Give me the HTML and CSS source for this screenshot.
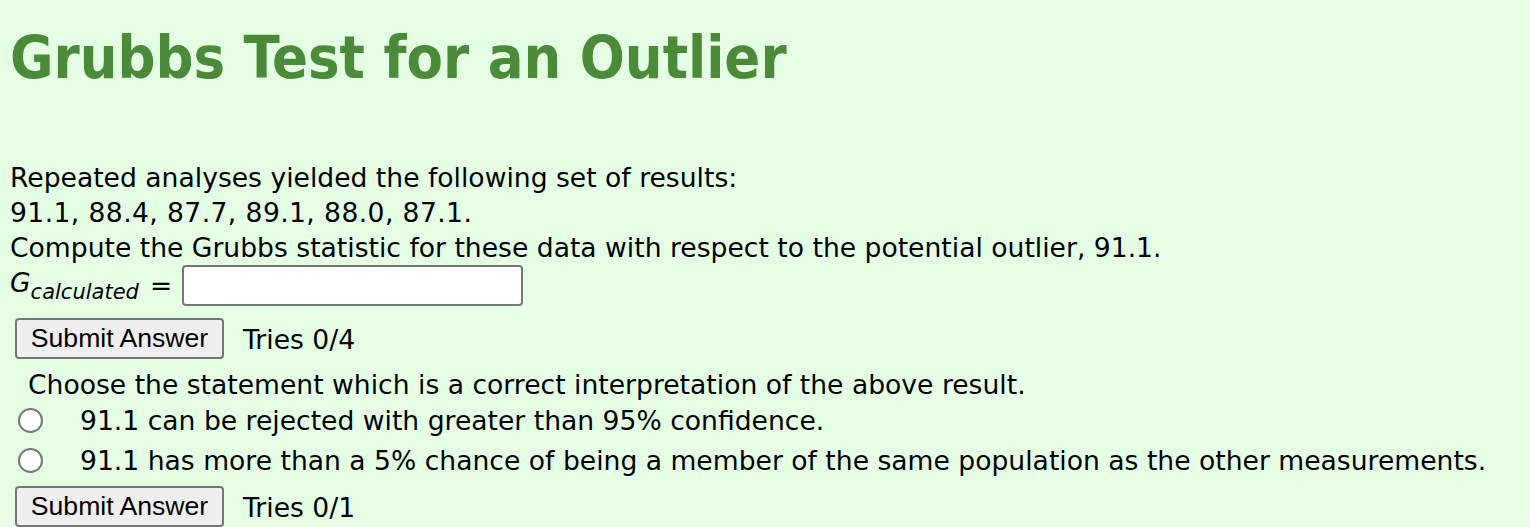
FILE: index.html
```html
<!DOCTYPE html>
<html>
<head>
<meta charset="utf-8">
<link rel="stylesheet" href="styles.css">
</head>
<body>
<h1 class="title">Grubbs Test for an Outlier</h1>
<div class="problem">
  <div class="line">Repeated analyses yielded the following set of results:</div>
  <div class="line nums">91.1, 88.4, 87.7, 89.1, 88.0, 87.1.</div>
  <div class="line">Compute the Grubbs statistic for these data with respect to the potential outlier, 91.1.</div>
  <div class="gline"><span class="gvar">G<sub>calculated</sub></span><span class="eq">=</span><input class="answer" type="text"></div>
  <div class="submitrow first"><button class="submit">Submit Answer</button><span class="tries">Tries 0/4</span></div>
  <div class="question">Choose the statement which is a correct interpretation of the above result.</div>
  <label class="choice"><input type="radio" name="c" class="radio"><span class="ctext">91.1 can be rejected with greater than 95% confidence.</span></label>
  <label class="choice"><input type="radio" name="c" class="radio"><span class="ctext">91.1 has more than a 5% chance of being a member of the same population as the other measurements.</span></label>
  <div class="submitrow last"><button class="submit">Submit Answer</button><span class="tries">Tries 0/1</span></div>
</div>
</body>
</html>
```
FILE: styles.css
```css
html, body {
  margin: 0;
  padding: 0;
  background: #e5ffe5;
}
body {
  padding: 0 10px;
  font-family: "DejaVu Sans", Verdana, sans-serif;
  color: #000;
}
.title {
  margin: 0;
  padding-top: 23px;
  font-family: "DejaVu Sans Condensed", "DejaVu Sans", sans-serif;
  font-stretch: condensed;
  font-size: 59px;
  line-height: 70px;
  font-weight: bold;
  color: #4a8a38;
}
.problem {
  margin-top: 67px;
  font-size: 26.6px;
}
.line {
  line-height: 35px;
  height: 35px;
  white-space: nowrap;
}
.nums {
  letter-spacing: 0.4px;
}
.gline {
  display: flex;
  align-items: center;
  height: 41px;
}
.gvar {
  font-style: italic;
}
.gvar sub {
  font-size: 21px;
  vertical-align: -7px;
}
.eq {
  margin: 0 10px 0 11px;
}
.answer {
  width: 333px;
  height: 33px;
  margin: 0;
  padding: 2px;
  border: 2px solid #767676;
  border-radius: 4px;
  background: #fff;
  box-sizing: content-box;
}
.submitrow {
  display: flex;
  align-items: center;
  padding-left: 5px;
  height: 41px;
}
.submitrow.first {
  margin-top: 12px;
}
.submitrow.last {
  margin-top: 6px;
}
.submit {
  font-family: "Liberation Sans", Arial, sans-serif;
  font-size: 26.6px;
  height: 41px;
  width: 209px;
  padding: 0;
  border: 2px solid #767676;
  border-radius: 4px;
  background: #efefef;
  color: #000;
}
.tries {
  margin-left: 19px;
  padding-top: 2px;
}
.question {
  margin-top: 11px;
  padding-left: 18px;
  line-height: 30px;
}
.choice {
  display: flex;
  align-items: center;
  height: 40px;
}
.radio {
  appearance: none;
  -webkit-appearance: none;
  width: 25px;
  height: 25px;
  margin: 0 0 0 8px;
  border: 2px solid #767676;
  border-radius: 50%;
  background: #fff;
  box-sizing: border-box;
}
.ctext {
  margin-left: 37px;
}
```
